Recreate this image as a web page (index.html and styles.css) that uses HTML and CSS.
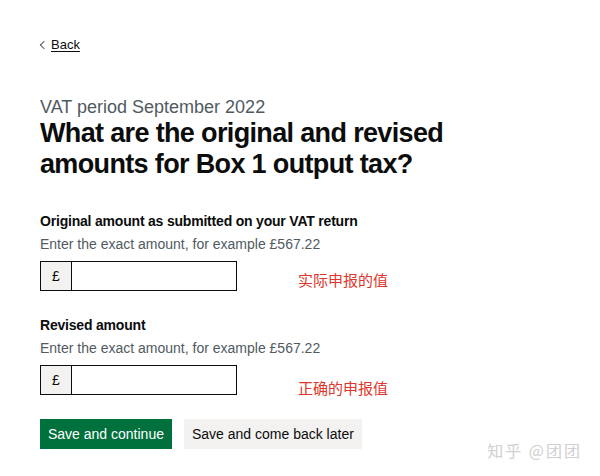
FILE: index.html
```html
<!DOCTYPE html>
<html lang="en">
<head>
    <meta charset="UTF-8">
    <meta name="viewport" content="width=device-width, initial-scale=1.0">
    <title>Box 1 output tax - VAT</title>
    <link rel="stylesheet" href="styles.css">
</head>
<body>
    <div class="page">
        <a href="#" class="back-link">Back</a>

        <main class="main">
            <span class="caption">VAT period September 2022</span>
            <h1 class="heading">What are the original and revised amounts for Box 1 output tax?</h1>

            <form>
                <div class="form-group">
                    <label class="label" for="original">Original amount as submitted on your VAT return</label>
                    <div class="hint">Enter the exact amount, for example £567.22</div>
                    <div class="input-row">
                        <div class="input-wrapper">
                            <div class="prefix">£</div>
                            <input class="input" type="text" id="original">
                        </div>
                        <span class="note note-first">实际申报的值</span>
                    </div>
                </div>

                <div class="form-group">
                    <label class="label" for="revised">Revised amount</label>
                    <div class="hint">Enter the exact amount, for example £567.22</div>
                    <div class="input-row">
                        <div class="input-wrapper">
                            <div class="prefix">£</div>
                            <input class="input" type="text" id="revised">
                        </div>
                        <span class="note note-second">正确的申报值</span>
                    </div>
                </div>

                <div class="button-group">
                    <button type="submit" class="button">Save and continue</button>
                    <button type="button" class="button button-secondary">Save and come back later</button>
                </div>
            </form>
        </main>
    </div>

    <div class="watermark">知乎 @团团</div>
</body>
</html>
```

FILE: styles.css
```css
body {
    margin: 0;
    font-family: "Liberation Sans", Arial, sans-serif;
    color: #0b0c0c;
    background: white;
}
.page {
    padding: 35px 40px 0;
}
.back-link {
    display: inline-block;
    position: relative;
    padding-left: 11px;
    font-size: 13px;
    line-height: 16px;
    color: #0b0c0c;
    text-decoration: underline;
    text-underline-offset: 2px;
}
.back-link::before {
    content: "";
    position: absolute;
    left: 1px;
    top: 5px;
    width: 5px;
    height: 5px;
    border-left: 1px solid #505a5f;
    border-bottom: 1px solid #505a5f;
    transform: rotate(45deg);
}
.main {
    padding-top: 43px;
}
.caption {
    display: block;
    font-size: 18px;
    line-height: 22px;
    color: #505a5f;
}
.heading {
    margin: 0 0 32px;
    font-size: 27px;
    line-height: 31px;
    font-weight: bold;
    letter-spacing: -0.65px;
    max-width: 450px;
}
.form-group {
    margin-bottom: 25px;
}
.label {
    display: block;
    font-size: 14px;
    font-weight: bold;
    line-height: 18px;
    letter-spacing: -0.2px;
    margin-bottom: 5px;
}
.hint {
    font-size: 14px;
    line-height: 18px;
    color: #505a5f;
    margin-bottom: 8px;
}
.input-row {
    display: flex;
    align-items: flex-start;
}
.input-wrapper {
    display: flex;
    width: 197px;
    height: 30px;
    box-sizing: border-box;
    border: 1px solid #0b0c0c;
}
.prefix {
    width: 30px;
    flex-shrink: 0;
    background: #f3f2f1;
    border-right: 1px solid #0b0c0c;
    font-size: 14px;
    line-height: 28px;
    text-align: center;
}
.input {
    flex: 1;
    min-width: 0;
    border: none;
    padding: 0 6px;
    font-size: 14px;
}
.note {
    margin-left: 61px;
    font-family: "Noto Sans CJK SC", sans-serif;
    font-size: 15px;
    line-height: 18px;
    color: #e0352b;
}
.note-first {
    margin-top: 10px;
}
.note-second {
    margin-top: 14px;
}
.button-group {
    display: flex;
    gap: 12px;
    margin-top: -3px;
}
.button {
    font-family: inherit;
    font-size: 14px;
    line-height: 18px;
    padding: 6px 8px;
    border: none;
    border-radius: 0;
    cursor: pointer;
    color: white;
    background: #00703c;
    box-shadow: 0 2px 0 #002d18;
}
.button-secondary {
    color: #0b0c0c;
    background: #f3f2f1;
    box-shadow: 0 2px 0 #929191;
}
.watermark {
    position: absolute;
    right: 18px;
    bottom: 14px;
    font-family: "Noto Sans CJK SC", sans-serif;
    font-size: 16px;
    color: #d0d0d0;
    letter-spacing: 2px;
}
```
